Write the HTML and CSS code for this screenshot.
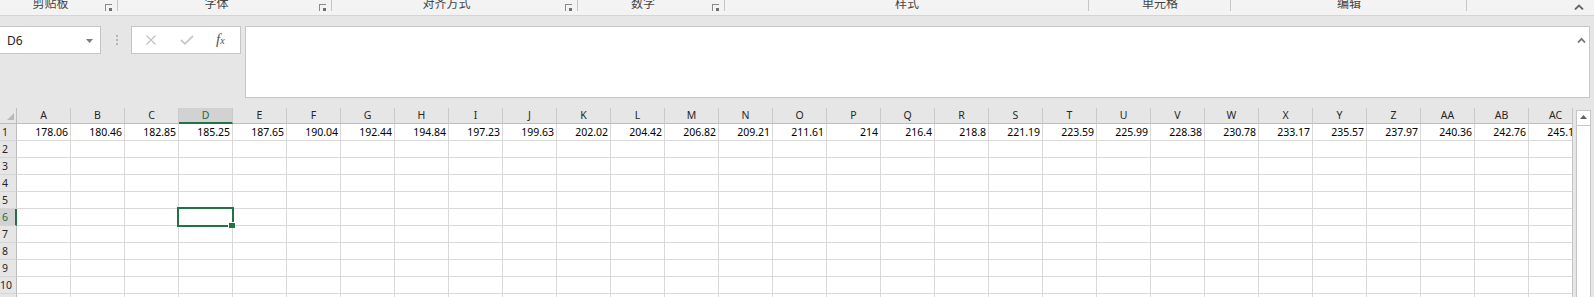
FILE: index.html
```
<!DOCTYPE html>
<html lang="zh-CN">
<head>
    <meta charset="UTF-8">
    <title>Sheet1 - Excel</title>
    <link rel="stylesheet" href="styles.css">
</head>
<body>
    <!-- Ribbon group labels (the ribbon itself is scrolled off the top) -->
    <div class="ribbon">
        <div class="group g-clip"><span class="label">剪贴板</span><i class="launcher"></i></div>
        <div class="group g-font"><span class="label">字体</span><i class="launcher"></i></div>
        <div class="group g-align"><span class="label">对齐方式</span><i class="launcher"></i></div>
        <div class="group g-num"><span class="label">数字</span><i class="launcher"></i></div>
        <div class="group g-style"><span class="label">样式</span></div>
        <div class="group g-cell"><span class="label">单元格</span></div>
        <div class="group g-edit"><span class="label">编辑</span></div>
        <div class="ribbon-end">
            <svg class="chevron" width="10" height="6" viewBox="0 0 10 6"><polyline points="1,5.5 5,1.5 9,5.5" fill="none" stroke="#666" stroke-width="1.8"/></svg>
        </div>
    </div>

    <!-- Formula bar -->
    <div class="formula-area">
        <div class="name-box">
            <span>D6</span>
            <svg width="7" height="4" viewBox="0 0 7 4"><polygon points="0,0 7,0 3.5,4" fill="#7a7a7a"/></svg>
        </div>
        <div class="grip"><i></i><i></i><i></i></div>
        <div class="fx-buttons">
            <svg class="btn" width="12" height="10" viewBox="0 0 12 10"><path d="M1.5 0.5 L10.5 9.5 M10.5 0.5 L1.5 9.5" stroke="#c2c2c2" stroke-width="1.2" fill="none"/></svg>
            <svg class="btn" width="14" height="10" viewBox="0 0 14 10"><polyline points="1,5 5,8.8 13,1" fill="none" stroke="#c8c8c8" stroke-width="1.8"/></svg>
            <span class="fx">f<sub>x</sub></span>
        </div>
        <div class="formula-input">
            <svg class="chevron" width="9" height="6" viewBox="0 0 9 6"><polyline points="1,5.5 4.5,1.8 8,5.5" fill="none" stroke="#777" stroke-width="1.8"/></svg>
        </div>
    </div>

    <!-- Worksheet -->
    <div class="sheet-area">
        <div class="viewport">
            <div class="sheet">
                <div class="corner"><i></i></div>
                <div class="ch">A</div><div class="ch">B</div><div class="ch">C</div><div class="ch active">D</div>
                <div class="ch">E</div><div class="ch">F</div><div class="ch">G</div><div class="ch">H</div>
                <div class="ch">I</div><div class="ch">J</div><div class="ch">K</div><div class="ch">L</div>
                <div class="ch">M</div><div class="ch">N</div><div class="ch">O</div><div class="ch">P</div>
                <div class="ch">Q</div><div class="ch">R</div><div class="ch">S</div><div class="ch">T</div>
                <div class="ch">U</div><div class="ch">V</div><div class="ch">W</div><div class="ch">X</div>
                <div class="ch">Y</div><div class="ch">Z</div><div class="ch">AA</div><div class="ch">AB</div>
                <div class="ch">AC</div>

                <div class="rh">1</div>
                <div class="c">178.06</div><div class="c">180.46</div><div class="c">182.85</div><div class="c">185.25</div>
                <div class="c">187.65</div><div class="c">190.04</div><div class="c">192.44</div><div class="c">194.84</div>
                <div class="c">197.23</div><div class="c">199.63</div><div class="c">202.02</div><div class="c">204.42</div>
                <div class="c">206.82</div><div class="c">209.21</div><div class="c">211.61</div><div class="c">214</div>
                <div class="c">216.4</div><div class="c">218.8</div><div class="c">221.19</div><div class="c">223.59</div>
                <div class="c">225.99</div><div class="c">228.38</div><div class="c">230.78</div><div class="c">233.17</div>
                <div class="c">235.57</div><div class="c">237.97</div><div class="c">240.36</div><div class="c">242.76</div>
                <div class="c">245.16</div>

                <div class="rh">2</div>
                <div class="rh">3</div>
                <div class="rh">4</div>
                <div class="rh">5</div>
                <div class="rh active">6</div>
                <div class="rh">7</div>
                <div class="rh">8</div>
                <div class="rh">9</div>
                <div class="rh">10</div>
                <div class="rh">11</div>

                <!-- active cell D6 -->
                <div class="selection"><span class="handle"></span></div>
            </div>
        </div>
        <div class="vscroll">
            <div class="vscroll-up">
                <svg width="7" height="4" viewBox="0 0 7 4"><polygon points="0,4 7,4 3.5,0" fill="#606060"/></svg>
            </div>
        </div>
    </div>
</body>
</html>
```
FILE: styles.css
```
body {
    margin: 0;
    width: 1594px;
    height: 297px;
    overflow: hidden;
    background: #e6e6e6;
    font-family: 'Noto Sans', 'Noto Sans CJK SC', sans-serif;
    color: #222;
}

/* ---------- ribbon ---------- */
.ribbon {
    display: flex;
    height: 15px;
    background: #f3f3f3;
    border-bottom: 1px solid #d5d5d5;
    overflow: hidden;
}

.group {
    position: relative;
    display: flex;
    align-items: flex-start;
    box-sizing: border-box;
    flex: none;
}

.group::after {
    content: '';
    position: absolute;
    right: 0;
    top: 0;
    width: 1px;
    height: 11px;
    background: #c6c6c6;
}

.g-clip { width: 118px; }
.g-font { width: 214px; }
.g-align { width: 246px; }
.g-num { width: 147px; }
.g-style { width: 364px; }
.g-cell { width: 142px; }
.g-edit { width: 236px; }

.label {
    flex: 1;
    text-align: center;
    font-size: 12px;
    line-height: 12px;
    margin-top: -2px;
    color: #444;
    white-space: nowrap;
}

.launcher {
    flex: none;
    width: 6px;
    height: 6px;
    margin: 4px 6px 0 4px;
    border-left: 1px solid #8a8a8a;
    border-top: 1px solid #8a8a8a;
    position: relative;
}

.launcher::after {
    content: '';
    position: absolute;
    right: 0;
    bottom: 0;
    width: 3px;
    height: 3px;
    background: #707070;
}

.ribbon-end {
    flex: 1;
    display: flex;
    justify-content: flex-end;
    padding: 4px 10px 0 0;
}

.ribbon-end .chevron { display: block; }

/* ---------- formula bar ---------- */
.formula-area {
    display: flex;
    align-items: flex-start;
    height: 92px;
    box-sizing: border-box;
    padding-top: 10px;
}

.name-box {
    display: flex;
    align-items: center;
    justify-content: space-between;
    box-sizing: border-box;
    width: 102px;
    height: 28px;
    margin-left: -1px;
    padding: 0 7px 0 7px;
    background: #fff;
    border: 1px solid #c6c6c6;
    font-size: 12px;
    color: #222;
}

.name-box svg { margin-top: 1px; }

.grip {
    width: 30px;
    height: 28px;
    display: flex;
    flex-direction: column;
    align-items: center;
    justify-content: center;
    gap: 2px;
    padding-left: 1px;
    box-sizing: border-box;
}

.grip i {
    width: 2px;
    height: 2px;
    background: #b4b4b4;
}

.fx-buttons {
    display: flex;
    align-items: center;
    box-sizing: border-box;
    width: 110px;
    height: 28px;
    background: #fff;
    border: 1px solid #c6c6c6;
    padding-left: 13px;
}

.fx-buttons .btn { display: block; }
.fx-buttons .btn + .btn { margin-left: 23px; }

.fx {
    margin-left: 22px;
    font-family: 'Liberation Serif', serif;
    font-style: italic;
    font-size: 15px;
    line-height: 1;
    color: #555;
    margin-top: -2px;
}

.fx sub {
    font-size: 10px;
    vertical-align: 0;
    margin-left: 0;
}

.formula-input {
    position: relative;
    box-sizing: border-box;
    width: 1345px;
    height: 72px;
    margin-left: 4px;
    background: #fff;
    border: 1px solid #c6c6c6;
    display: flex;
    justify-content: flex-end;
    padding: 10px 3px 0 0;
}

.formula-input .chevron { display: block; }

/* ---------- worksheet ---------- */
.sheet-area {
    display: flex;
    align-items: flex-start;
}

.viewport {
    position: relative;
    width: 1573px;
    height: 189px;
    overflow: hidden;
    border-right: 1px solid #c6c6c6;
    box-sizing: border-box;
}

.sheet {
    position: relative;
    display: grid;
    grid-template-columns: 17px repeat(29, 54px);
    grid-template-rows: 16px repeat(11, 17px);
    width: max-content;
    background-color: #fff;
    background-image:
        linear-gradient(to right, #d9d9d9 1px, transparent 1px),
        linear-gradient(to bottom, #d9d9d9 1px, transparent 1px);
    background-size: 54px 100%, 100% 17px;
    background-position: 16px 0, 0 15px;
    font-size: 10.5px;
}

.corner {
    position: relative;
    background: #e6e6e6;
    border-right: 1px solid #bdbdbd;
    border-bottom: 1px solid #bdbdbd;
}

.corner i {
    position: absolute;
    right: 2px;
    bottom: 3px;
    width: 0;
    height: 0;
    border-left: 7px solid transparent;
    border-bottom: 7px solid #b9b9b9;
}

.ch {
    box-sizing: border-box;
    background: #e6e6e6;
    border-right: 1px solid #cacaca;
    border-bottom: 1px solid #bdbdbd;
    text-align: center;
    line-height: 14px;
    color: #262626;
}

.ch.active {
    background: #d2d2d2;
    border-bottom: 2px solid #217346;
    color: #1e6b41;
}

.rh {
    grid-column: 1;
    box-sizing: border-box;
    background: #e6e6e6;
    border-right: 1px solid #bdbdbd;
    border-bottom: 1px solid #d6d6d6;
    padding-right: 6px;
    text-align: center;
    line-height: 17px;
    color: #262626;
}

.rh.active {
    background: #d2d2d2;
    border-right: 2px solid #217346;
    padding-right: 5px;
    color: #1e6b41;
}

.c {
    text-align: right;
    padding-right: 3px;
    line-height: 17px;
    color: #000;
    white-space: nowrap;
    overflow: hidden;
}

.selection {
    position: absolute;
    left: 177px;
    top: 99px;
    width: 57px;
    height: 20px;
    box-sizing: border-box;
    border: 2px solid #217346;
}

.handle {
    position: absolute;
    left: 49px;
    top: 13px;
    width: 6px;
    height: 5px;
    background: #217346;
    border-left: 1px solid #fff;
    border-top: 1px solid #fff;
}

.vscroll {
    width: 15px;
    height: 200px;
    margin: 2px 0 0 3px;
    box-sizing: border-box;
    background: #fff;
    border: 1px solid #c6c6c6;
}

.vscroll-up {
    height: 14px;
    border-bottom: 1px solid #c6c6c6;
    display: flex;
    align-items: center;
    justify-content: center;
}

.vscroll-up svg { display: block; margin-top: -2px; }
```
